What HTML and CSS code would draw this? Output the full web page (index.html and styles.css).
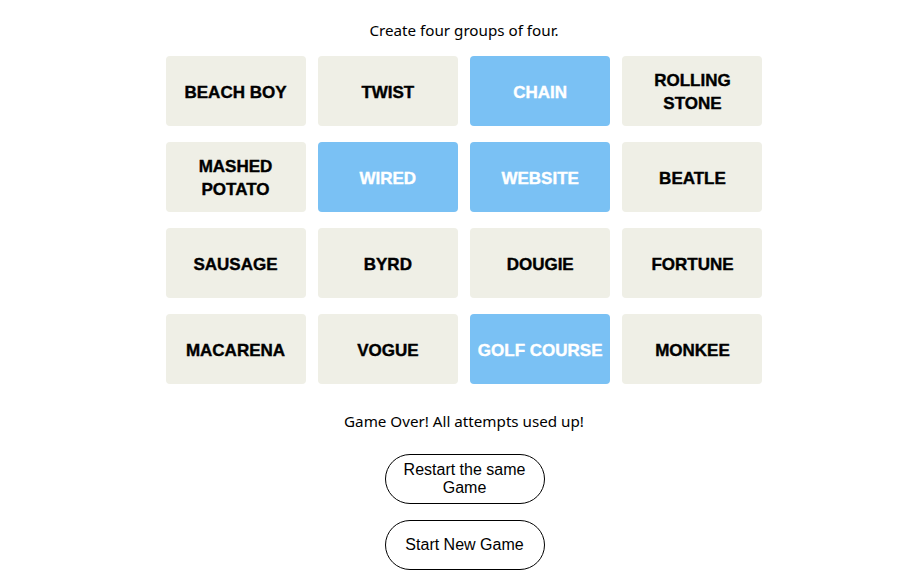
FILE: index.html
```html
<!DOCTYPE html>
<html>
<head>
<meta charset="utf-8">
<link rel="stylesheet" href="styles.css">
</head>
<body>
<main class="game">
  <p class="intro">Create four groups of four.</p>
  <div class="grid">
    <div class="tile">BEACH BOY</div>
    <div class="tile">TWIST</div>
    <div class="tile selected">CHAIN</div>
    <div class="tile">ROLLING<br>STONE</div>
    <div class="tile">MASHED<br>POTATO</div>
    <div class="tile selected">WIRED</div>
    <div class="tile selected">WEBSITE</div>
    <div class="tile">BEATLE</div>
    <div class="tile">SAUSAGE</div>
    <div class="tile">BYRD</div>
    <div class="tile">DOUGIE</div>
    <div class="tile">FORTUNE</div>
    <div class="tile">MACARENA</div>
    <div class="tile">VOGUE</div>
    <div class="tile selected">GOLF COURSE</div>
    <div class="tile">MONKEE</div>
  </div>
  <p class="status">Game Over! All attempts used up!</p>
  <button class="pill">Restart the same Game</button>
  <button class="pill">Start New Game</button>
</main>
</body>
</html>
```
FILE: styles.css
```css
html, body {
  margin: 0;
  padding: 0;
  background: #ffffff;
}
.game {
  display: flex;
  flex-direction: column;
  align-items: center;
  padding: 20px 0 0 6px;
  font-family: "Noto Sans", "Open Sans", sans-serif;
  color: #000;
}
.intro {
  margin: 0 0 16px;
  font-size: 15.2px;
  line-height: 20px;
}
.grid {
  display: grid;
  grid-template-columns: repeat(4, 140px);
  grid-auto-rows: 70px;
  column-gap: 12.33px;
  row-gap: 16px;
}
.tile {
  display: flex;
  align-items: center;
  justify-content: center;
  text-align: center;
  padding-top: 2px;
  background: #efefe6;
  border-radius: 4px;
  font-family: "Liberation Sans", Arial, sans-serif;
  font-weight: 700;
  font-size: 17px;
  line-height: 23px;
  color: #000;
  -webkit-text-stroke: 0.4px #000;
}
.tile.selected {
  background: #7ac1f4;
  color: #fff;
  -webkit-text-stroke: 0.4px #fff;
}
.status {
  margin: 27px 0 0;
  font-size: 15.2px;
  line-height: 20px;
}
.pill {
  box-sizing: border-box;
  width: 160px;
  height: 50px;
  margin: 16px 0 0 1px;
  padding: 0 14px;
  border: 1px solid #000;
  border-radius: 25px;
  background: #fff;
  font-family: "Liberation Sans", Arial, sans-serif;
  font-size: 16px;
  line-height: 18px;
  color: #000;
}
.status + .pill {
  margin-top: 23px;
}
```
